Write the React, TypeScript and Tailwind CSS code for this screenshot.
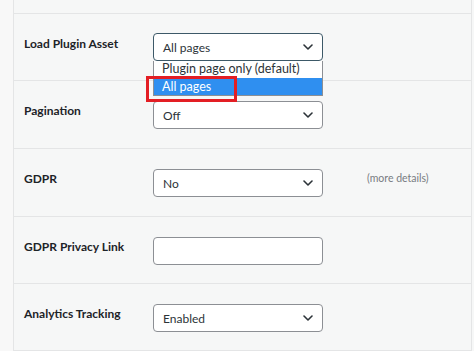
import React from "react";

const Chevron = () => (
  <svg width="10" height="6" viewBox="0 0 10 6" fill="none" className="shrink-0">
    <path d="M1 1l4 4 4-4" stroke="#2c3338" strokeWidth="1.6" strokeLinecap="round" strokeLinejoin="round" />
  </svg>
);

const Select = ({ value, focused }: { value: string; focused?: boolean }) => (
  <div
    className={
      focused
        ? "w-[170px] h-[28px] rounded-[4px] border border-[#3d5968] bg-white flex items-center justify-between pl-[9px] pr-[9px] text-[12px] text-[#2c3338]"
        : "w-[170px] h-[28px] rounded-[4px] border border-[#8c8f94] bg-white flex items-center justify-between pl-[9px] pr-[9px] text-[12px] text-[#2c3338]"
    }
  >
    <span className="mt-[2px]">{value}</span>
    <Chevron />
  </div>
);

const Row = ({
  label,
  children,
  extra,
  h = "h-[68px]",
}: {
  label: string;
  children: React.ReactNode;
  extra?: React.ReactNode;
  h?: string;
}) => (
  <div className={`${h} border-b border-[#e4e5e6] flex pt-[20px] pl-[10px]`}>
    <div className="w-[129px] text-[12px] font-bold text-[#1d2327] leading-[18px] pt-[1px]">{label}</div>
    <div className="relative">{children}</div>
    {extra}
  </div>
);

export default function App() {
  return (
    <div
      className="w-[474px] h-[351px] overflow-hidden bg-[#f6f7f7] flex"
      style={{ fontFamily: 'Lato, "Noto Sans", sans-serif' }}
    >
      <div className="w-[14px] border-r border-[#e4e5e6] bg-[#f8f8f8]" />
      <div className="w-[458px] border-r border-[#e4e5e6] flex flex-col">
        <div className="h-[14px] border-b border-[#e4e5e6] shrink-0" />
        <Row label="Load Plugin Asset">
          <div className="-mt-[1px]">
            <Select value="All pages" focused />
          </div>
          <div className="absolute left-0 top-[27px] w-[170px] bg-white border border-[#8c8f94] border-t-0 text-[12.5px] leading-[17px] text-[#2c3338] z-10">
            <div className="pl-[8px] h-[17px] overflow-hidden leading-[15px]">Plugin page only (default)</div>
            <div className="pl-[8px] h-[17px] bg-[#2f8ff0] text-white">All pages</div>
          </div>
          <div className="absolute left-[-7px] top-[42px] w-[91px] h-[26px] border-[3px] border-[#e31e24] z-20" />
        </Row>
        <Row label="Pagination" h="h-[69px]">
          <Select value="Off" />
        </Row>
        <Row
          label="GDPR"
          extra={<div className="ml-[44px] text-[10.5px] text-[#787c82] leading-[18px]">(more details)</div>}
        >
          <Select value="No" />
        </Row>
        <Row label="GDPR Privacy Link">
          <div className="w-[170px] h-[28px] rounded-[4px] border border-[#8c8f94] bg-white" />
        </Row>
        <Row label="Analytics Tracking">
          <Select value="Enabled" />
        </Row>
      </div>
    </div>
  );
}
